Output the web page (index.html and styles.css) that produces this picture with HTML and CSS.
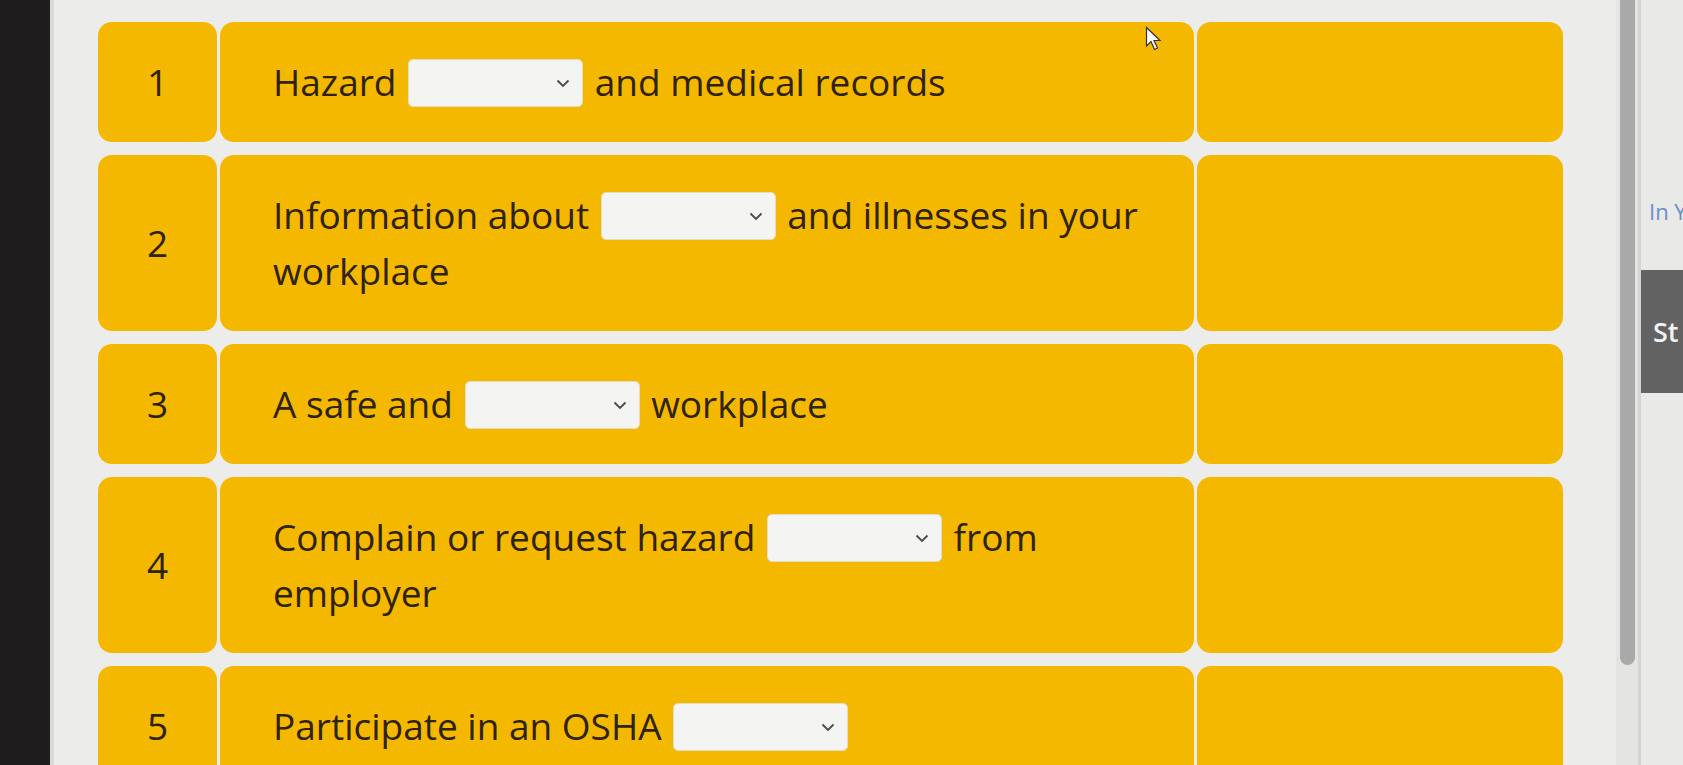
FILE: index.html
```html
<!DOCTYPE html>
<html lang="en">
<head>
    <meta charset="UTF-8">
    <meta name="viewport" content="width=device-width, initial-scale=1.0">
    <title>Worker Rights - Matching</title>
    <link rel="stylesheet" href="styles.css">
</head>
<body>
    <div class="screen">
        <!-- Left edge of the monitor -->
        <div class="bezel"></div>

        <!-- Question list -->
        <main class="page">
            <div class="rows">
                <div class="row">
                    <div class="num">1</div>
                    <div class="prompt">
                        <p>Hazard <span class="pick"><svg viewBox="0 0 14 9"><path d="M1.5 1.5 L7 7 L12.5 1.5"/></svg></span> and medical records</p>
                    </div>
                    <div class="answer"></div>
                </div>

                <div class="row">
                    <div class="num">2</div>
                    <div class="prompt">
                        <p>Information about <span class="pick"><svg viewBox="0 0 14 9"><path d="M1.5 1.5 L7 7 L12.5 1.5"/></svg></span> and illnesses in your workplace</p>
                    </div>
                    <div class="answer"></div>
                </div>

                <div class="row">
                    <div class="num">3</div>
                    <div class="prompt">
                        <p>A safe and <span class="pick"><svg viewBox="0 0 14 9"><path d="M1.5 1.5 L7 7 L12.5 1.5"/></svg></span> workplace</p>
                    </div>
                    <div class="answer"></div>
                </div>

                <div class="row">
                    <div class="num">4</div>
                    <div class="prompt">
                        <p>Complain or request hazard <span class="pick"><svg viewBox="0 0 14 9"><path d="M1.5 1.5 L7 7 L12.5 1.5"/></svg></span> from employer</p>
                    </div>
                    <div class="answer"></div>
                </div>

                <div class="row">
                    <div class="num">5</div>
                    <div class="prompt">
                        <p>Participate in an OSHA <span class="pick"><svg viewBox="0 0 14 9"><path d="M1.5 1.5 L7 7 L12.5 1.5"/></svg></span></p>
                    </div>
                    <div class="answer"></div>
                </div>
            </div>
        </main>

        <!-- Scrollbar -->
        <div class="scroll">
            <div class="thumb"></div>
        </div>

        <!-- Next panel, cut off at the edge -->
        <aside class="side">
            <p class="side-link">In Y</p>
            <div class="side-box">St</div>
        </aside>

        <!-- Mouse pointer -->
        <svg class="pointer" viewBox="0 0 18 26">
            <path d="M1.5 1.5 L1.5 20 L6 15.5 L9.5 23.5 L12.5 22 L9 14.5 L15 14.5 Z"/>
        </svg>
    </div>
</body>
</html>
```

FILE: styles.css
```css
/* Reset */
body, p {
    margin: 0;
    padding: 0;
}

body {
    font-family: 'Open Sans', 'Noto Sans', sans-serif;
    background: #ebebea;
    overflow: hidden;
}

.screen {
    position: relative;
    display: flex;
    height: 765px;
    overflow: hidden;
}

/* Monitor edge */
.bezel {
    width: 54px;
    flex-shrink: 0;
    background: #1f1c1d;
    border-right: 4px solid #d9d9d7;
    box-sizing: border-box;
}

/* Page */
.page {
    flex: 1;
    min-width: 0;
    padding: 22px 53px 0 44px;
    background: #ececeb;
}

.rows {
    display: flex;
    flex-direction: column;
    gap: 13px;
}

.row {
    display: flex;
    gap: 3px;
    color: #2e2308;
    font-size: 37px;
    line-height: 56px;
}

.num,
.prompt,
.answer {
    background: #f5b800;
    border-radius: 14px;
}

.num {
    width: 119px;
    flex-shrink: 0;
    display: flex;
    align-items: center;
    justify-content: center;
}

.prompt {
    flex: 1;
    display: flex;
    align-items: center;
    padding: 32px 20px 32px 53px;
}

.answer {
    width: 366px;
    flex-shrink: 0;
}

/* Dropdown */
.pick {
    display: inline-flex;
    align-items: center;
    justify-content: flex-end;
    width: 175px;
    height: 48px;
    margin: 0 2px;
    padding-right: 12px;
    box-sizing: border-box;
    background: #f4f4f2;
    border: 1px solid #e6dcc0;
    border-radius: 5px;
    vertical-align: middle;
    position: relative;
    top: -3px;
}

.pick svg {
    width: 14px;
    height: 9px;
    fill: none;
    stroke: #4a4a4a;
    stroke-width: 1.8;
}

/* Scrollbar */
.scroll {
    width: 22px;
    flex-shrink: 0;
    background: #e4e4e3;
    display: flex;
    justify-content: center;
}

.thumb {
    width: 15px;
    height: 665px;
    background: #a9a9a9;
    border-radius: 0 0 8px 8px;
}

/* Next panel */
.side {
    width: 42px;
    flex-shrink: 0;
    background: #e9e9e8;
    border-left: 3px solid #d4d4d2;
    padding-top: 195px;
    white-space: nowrap;
    overflow: hidden;
}

.side-link {
    color: #6b8dcb;
    font-size: 22px;
    line-height: 32px;
    padding-left: 8px;
}

.side-box {
    margin-top: 43px;
    height: 123px;
    background: #626262;
    color: #f2f2f2;
    font-size: 27px;
    font-weight: 600;
    line-height: 123px;
    padding-left: 12px;
}

/* Pointer over the page */
.pointer {
    position: absolute;
    left: 1145px;
    top: 26px;
    width: 18px;
    height: 26px;
    fill: #fafafa;
    stroke: #333;
    stroke-width: 1.2;
}
```
